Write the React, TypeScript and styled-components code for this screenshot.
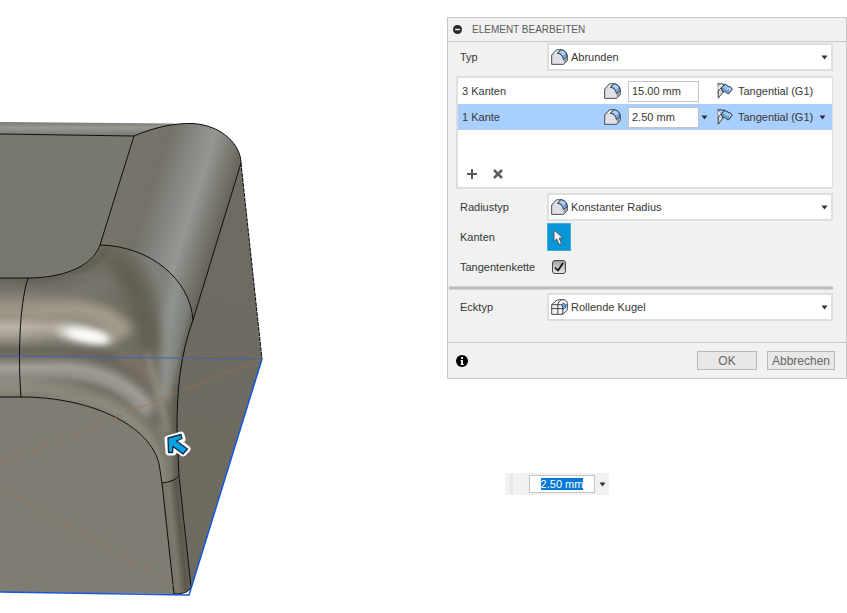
import React, { useEffect, useRef } from "react";
import styled, { createGlobalStyle } from "styled-components";

const GlobalStyle = createGlobalStyle`
  * { box-sizing: border-box; }
  body {
    margin: 0;
    background: #fff;
    font-family: "Liberation Sans", Arial, sans-serif;
    font-size: 11px;
    color: #373737;
  }
  input, select, button { font: inherit; color: inherit; margin: 0; }
`;

const Workspace = styled.main`
  display: grid;
  grid-template-columns: minmax(0, 1fr) 400px;
  min-height: 100vh;
  overflow: hidden;
`;
const Viewport = styled.div`
  overflow: hidden;
  padding-top: 110px;
`;
const Model = styled.svg`
  display: block;
  width: 270px;
  height: 490px;
`;
const Side = styled.div`
  padding-top: 17px;
`;
const Panel = styled.form`
  background: #f1f1f1;
  border: 1px solid #c8c8c8;
`;
const PanelHeader = styled.header`
  display: flex;
  align-items: center;
  gap: 10px;
  height: 24px;
  padding-left: 5px;
  border-bottom: 1px solid #c8c8c8;
`;
const Title = styled.h1`
  margin: 0;
  font-size: 10px;
  font-weight: 400;
  color: #5c5c5c;
`;
const IconButton = styled.button`
  display: flex;
  padding: 0;
  border: 0;
  background: none;
`;
const Row = styled.div`
  display: grid;
  grid-template-columns: 87px minmax(0, 1fr);
  align-items: center;
  height: 30px;
  padding: 0 13px 0 12px;
`;
const SelectBox = styled.div`
  display: flex;
  align-items: center;
  gap: 3px;
  height: 28px;
  padding: 0 3px 0 2px;
  background: #fff;
  border: 2px solid #dedede;
`;
const Select = styled.select`
  flex: 1;
  min-width: 0;
  appearance: none;
  padding: 0;
  border: 0;
  background: transparent;
`;
const List = styled.div`
  display: flex;
  flex-direction: column;
  height: 113px;
  margin: 4px 13px 3px 8px;
  background: #fff;
  border: solid #dedede;
  border-width: 2px 1px 2px 2px;
`;
const EdgeRow = styled.div<{ $selected?: boolean }>`
  display: grid;
  grid-template-columns: minmax(0, 1fr) 17px 7px 71px 11px 7px 16px 5px 78px 12px;
  align-items: center;
  height: 26px;
  padding: 0 4px;
  background: ${(p) => (p.$selected ? "#a9cffe" : "#fff")};
`;
const Cell = styled.span<{ $col: number }>`
  display: flex;
  justify-content: center;
  grid-column: ${(p) => p.$col};
`;
const RadiusInput = styled.input`
  grid-column: 4;
  width: 100%;
  height: 21px;
  padding: 0 3px;
  border: 1px solid #c4c4c4;
  border-radius: 0;
  background: #fff;
`;
const Continuity = styled(Select)`
  grid-column: 9;
  width: 100%;
`;
const ListTools = styled.div`
  display: flex;
  gap: 14px;
  margin-top: auto;
  padding: 0 0 7px 8px;
`;
const PickButton = styled.button`
  display: flex;
  align-items: center;
  justify-content: center;
  width: 24px;
  height: 28px;
  padding: 0;
  border: 1px solid #42aae0;
  background: #0696d7;
`;
const CheckWrap = styled.span`
  display: grid;
  width: 14px;
  height: 14px;
  margin-left: 5px;
  & > * { grid-area: 1 / 1; }
  svg { pointer-events: none; }
`;
const Check = styled.input`
  appearance: none;
  width: 14px;
  height: 14px;
  border: 1px solid #454545;
  border-radius: 3px;
  background: linear-gradient(#a5a5a5, #e4e4e4);
`;
const Divider = styled.hr`
  height: 4px;
  margin: 4px 13px 2px 1px;
  border: solid #d6d6d6;
  border-width: 1px 0;
  background: #bcbcbc;
`;
const Footer = styled.footer`
  display: flex;
  align-items: center;
  gap: 10px;
  height: 36px;
  margin-top: 20px;
  padding: 0 11px 0 8px;
  border-top: 1px solid #c8c8c8;
  & > :first-child { margin-right: auto; }
`;
const ActionButton = styled.button<{ $width: number }>`
  width: ${(p) => p.$width}px;
  height: 19px;
  padding: 0;
  border: 1px solid #b9b9b9;
  background: #e8e8e8;
  color: #666;
  font-size: 12px;
  line-height: 16px;
`;
const ValueBar = styled.div`
  display: flex;
  align-items: center;
  width: 104px;
  height: 22px;
  margin: 94px 0 0 58px;
  padding: 0 3px 0 5px;
  background: #f1f1f1;
`;
const Grip = styled.span`
  width: 3px;
  height: 20px;
  margin-right: 16px;
  background: conic-gradient(#dcdcdc 25%, #f1f1f1 0 50%, #dcdcdc 0 75%, #f1f1f1 0) 0 0 / 2px 2px;
`;
const ValueInput = styled.input`
  width: 66px;
  height: 18px;
  margin-right: auto;
  padding: 0;
  border: 1px solid #c4c4c4;
  outline: 0;
  background: #fff;
  line-height: 15px;
  text-align: center;
  &::selection { background: #0078d7; color: #fff; }
`;

const Caret = () => (
  <svg width="7" height="5" viewBox="0 0 7 5" aria-hidden="true">
    <path d="M.5.5h6L3.5 4.5Z" fill="#303030" />
  </svg>
);

const FilletIcon = () => (
  <svg width="17" height="16" viewBox="0 0 17 16" aria-hidden="true">
    <path d="M.7 15.3V6L5.5.8h5.2c3.2.6 5.3 3 5.6 6.4v4.4l-3.8 3.7Z" fill="#cfd1d6" stroke="#40444b" />
    <path d="M1.6 14.5V6.5L3.500 5h3c3.600.6 5.500 3.300 5.700 6.200v3.300Z" fill="#dfe1e6" />
    <path d="m3.500 4.300 3-2.800h1.800L6.400 4.300Z" fill="#fff" />
    <path d="M6.200 4.200 9.500.9c3.800-.1 6.400 2.800 6.700 6.800l-3.800 3c-.4-3.400-2.500-6.200-6.200-6.500Z" fill="#7fa6d2" stroke="#2b3f58" />
    <path d="M8.500 3.600 10.600 1.600c1.800.3 3.200 1.400 4 2.900l-2.600 2c-.8-1.400-2-2.400-3.500-2.900Z" fill="#b4d0ee" />
    <path d="M13 11.300v3.200l2.800-2.800V9Z" fill="#9699a1" />
  </svg>
);

const BallIcon = () => (
  <svg width="17" height="16" viewBox="0 0 17 16" aria-hidden="true">
    <path d="M.7 15.3V5.700L5 1.800C6 1 7 .7 8.500.7H13c2 .3 3.200 1.800 3.300 4V11l-4.500 4.300Z" fill="#f3f4f5" stroke="#454545" />
    <path d="M.7 5.700h8.800c1.600.3 2.300 1.400 2.300 3.300v6.300M.7 9.600h11M6.800 15V5.700C7.300 3.200 8.400 1.700 10.800.7M11.800 9.600l4.500-4.500" fill="none" stroke="#454545" />
    <path d="m10 5.800 2.400-1.500c1.800.5 2.600 1.700 2.700 3.700L12 10.500c0-2.200-.4-3.700-2-4.700Z" fill="#6d9fd8" stroke="#284c7b" strokeWidth=".8" />
  </svg>
);

const TangentIcon = () => (
  <svg width="16" height="16" viewBox="0 0 16 16" aria-hidden="true">
    <path d="M.8.8 4.4 4.800C2 6.500 1.100 8.600 1.200 10.200Z" fill="#fff" stroke="#505050" strokeWidth=".6" />
    <path d="M1.200 15.200V9.700c.2-2.400 1.300-4 3.600-4.900l1 4.700Z" fill="#d9d9d9" stroke="#333" strokeWidth=".9" />
    <path d="M.7.7 7.500 1.300" stroke="#333" />
    <path d="M4.500 4.700 7.500 1.200c1.800.2 3.200 2.400 5.300 2.400l2.600 2.300-3.800 5c-1.900-.1-2.700-1.900-4.200-2.400L5.500 9Z" fill="#6d9fc9" stroke="#263b52" />
    <path d="m6.200 4.600 1.900-2.200c1.600.4 3 2.200 4.600 2.400L10.600 7.400C8.900 7 7.800 5.400 6.200 4.600Z" fill="#a3c8e8" />
    <path d="m12.700 4.600 1.500 1.300-2.200 2.800Z" fill="#eaf3fb" />
  </svg>
);

const topFace = "M0 134 134 136 100 245C92 268 60 278 28 278H0Z";
const sideFillet =
  "M134 136C155 127 175 123 192 123.500C223 125 241 146 241 163L193 320C190 279 150 246 100 245Z";
const corner =
  "M0 278H28C60 278 92 268 100 245C150 246 190 279 193 320C180 356 177 390 177 430L179 476C175 480 170 482 162 483L160 470C156 428 94 397 21 397H0Z";
const frontFace = "M0 397H21C94 397 156 428 160 470L162 483 174 594 0 592Z";
const rightFace = "M241 163 262 359 189 595 191 587 179 476 177 430C177 390 180 356 193 320Z";
const frontEdge = "M162 483C170 482 175 480 179 476L191 587C189 592 183 594 174 594Z";

const ModelView = () => (
  <Model viewBox="0 110 270 490" role="img" aria-label="Modell">
    <defs>
      <linearGradient id="strip" x2="0" y2="1">
        <stop stopColor="#777970" />
        <stop offset=".4" stopColor="#959991" />
        <stop offset="1" stopColor="#777970" />
      </linearGradient>
      <linearGradient id="side" gradientUnits="userSpaceOnUse" x1="134" y1="136" x2="239" y2="169">
        <stop stopColor="#78746b" />
        <stop offset=".3" stopColor="#757168" />
        <stop offset=".5" stopColor="#838680" />
        <stop offset=".7" stopColor="#949891" />
        <stop offset=".86" stopColor="#7b7a73" />
        <stop offset="1" stopColor="#68645b" />
      </linearGradient>
      <linearGradient id="left" gradientUnits="userSpaceOnUse" x1="0" y1="278" x2="0" y2="397">
        <stop stopColor="#66625a" />
        <stop offset=".1" stopColor="#77736a" />
        <stop offset=".24" stopColor="#9c9484" />
        <stop offset=".33" stopColor="#9d9586" />
        <stop offset=".41" stopColor="#bab3a9" />
        <stop offset=".49" stopColor="#a29c92" />
        <stop offset=".6" stopColor="#6c675c" />
        <stop offset=".66" stopColor="#706c62" />
        <stop offset=".75" stopColor="#a29f9a" />
        <stop offset=".83" stopColor="#8e8c83" />
        <stop offset=".94" stopColor="#8c8a7d" />
        <stop offset="1" stopColor="#7d7a6e" />
      </linearGradient>
      <linearGradient id="fadeMask" x2="1">
        <stop offset=".2" stopColor="#fff" />
        <stop offset="1" stopColor="#000" />
      </linearGradient>
      <mask id="leftFade"><path d="M0 270H100V400H0Z" fill="url(#fadeMask)" /></mask>
      <linearGradient id="right" gradientUnits="userSpaceOnUse" x1="240" y1="170" x2="200" y2="560">
        <stop stopColor="#6f6b63" />
        <stop offset="1" stopColor="#6d6a5f" />
      </linearGradient>
      <linearGradient id="edge" gradientUnits="userSpaceOnUse" x1="166" y1="530" x2="186" y2="528">
        <stop stopColor="#77746a" />
        <stop offset=".35" stopColor="#7b786e" />
        <stop offset=".7" stopColor="#5b574b" />
        <stop offset="1" stopColor="#69655b" />
      </linearGradient>
      <clipPath id="cornerClip"><path d={corner} /></clipPath>
      <filter id="b3" filterUnits="userSpaceOnUse" x="-60" y="200" width="320" height="340"><feGaussianBlur stdDeviation="3" /></filter>
      <filter id="b5" filterUnits="userSpaceOnUse" x="-60" y="200" width="320" height="340"><feGaussianBlur stdDeviation="5" /></filter>
      <filter id="b8" filterUnits="userSpaceOnUse" x="-60" y="200" width="320" height="340"><feGaussianBlur stdDeviation="8" /></filter>
    </defs>
    <path d="M0 122 175 123.500 134 136 0 134Z" fill="url(#strip)" />
    <path d={topFace} fill="#797870" />
    <path d={sideFillet} fill="url(#side)" />
    <path d={rightFace} fill="url(#right)" />
    <path d={frontFace} fill="#7f7c74" />
    <path d={frontEdge} fill="url(#edge)" />
    <g clipPath="url(#cornerClip)" fill="none">
      <path d={corner} fill="#716d63" />
      <path d="M130 235C170 245 198 275 200 320L170 390 162 330C158 290 150 265 130 245Z" fill="#7f827b" filter="url(#b5)" />
      <path d="M191 240C174 280 163 330 166 400" stroke="#929790" strokeWidth="11" filter="url(#b5)" />
      <path d="M203 295C185 340 179 390 178 485" stroke="#5f5b51" strokeWidth="11" filter="url(#b3)" />
      <path d="M-20 278H30C65 278 100 268 108 246" stroke="#5e5a50" strokeWidth="6" filter="url(#b3)" />
      <path d="M62 290C90 288 104 285 116 280" stroke="#7c796f" strokeWidth="14" filter="url(#b8)" />
      <path d="M112 258C132 274 144 305 152 352" stroke="#59564a" strokeWidth="13" filter="url(#b8)" />
      <path d="M-20 309H60C95 310 112 316 126 336" stroke="#a39b8b" strokeWidth="20" filter="url(#b5)" />
      <path d="M-20 328H50C78 329 96 334 114 341" stroke="#b5aea3" strokeWidth="10" filter="url(#b5)" />
      <path d="M-20 352H80C108 354 126 362 145 386" stroke="#68645a" strokeWidth="12" filter="url(#b5)" />
      <path d="M118 358C134 358 144 370 149 382" stroke="#7d7368" strokeWidth="12" filter="url(#b5)" />
      <path d="M-20 367H55C100 369 130 382 151 410" stroke="#aaa7a2" strokeWidth="11" filter="url(#b5)" />
      <path d="M-20 392H20C92 392 138 405 162 470V490" stroke="#8d8b7e" strokeWidth="16" filter="url(#b5)" />
      <path d="M-20 372H55C98 374 128 388 148 416" stroke="#9d9a93" strokeWidth="5" filter="url(#b3)" />
      <path d="M147 354C155 378 160 402 168 432" stroke="#aaa597" strokeWidth="3" filter="url(#b3)" />
      <path d="M160 425C168 445 171 465 171 490" stroke="#807c72" strokeWidth="9" filter="url(#b3)" />
      <path d="M177 385V490" stroke="#5d594e" strokeWidth="6" filter="url(#b3)" />
      <path d="M0 278H100V397H0Z" fill="url(#left)" mask="url(#leftFade)" />
      <ellipse cx="84" cy="335" rx="27" ry="7" transform="rotate(10 84 335)" fill="#efede8" filter="url(#b5)" />
      <ellipse cx="88" cy="336" rx="20" ry="5" transform="rotate(12 88 336)" fill="#fff" filter="url(#b3)" />
    </g>
    <g fill="none" stroke="#0b0b0b">
      <path d="M0 134 134 136 100 245C92 268 60 278 28 278H0M134 136C155 127 175 123 192 123.500C223 125 241 146 241 163L193 320C190 279 150 246 100 245M193 320C180 356 177 390 177 430L179 476 191 587C189 592 183 594 174 594L162 483C170 482 175 480 179 476M162 483 160 470C156 428 94 397 21 397H0M28 278C19 306 18 360 21 397" />
      <path d="m241 163 21 196" strokeDasharray="4 1" />
    </g>
    <g fill="none" stroke="#a36f45" strokeDasharray="11 4" opacity=".8">
      <path d="M0 463 262 359M0 487 187 593" />
    </g>
    <path d="M0 356 262 359" stroke="#4262b5" />
    <path d="M262 359 189 595 0 592" fill="none" stroke="#1456e0" strokeWidth="1.500" />
    <g strokeLinejoin="round">
      <path d="M168 439 181 435 182 439 177 441 187 449 183 453 173 446 173 452 169 452Z" fill="#fff" stroke="#fff" strokeWidth="7" />
      <path d="M168 438 181 434.500 182 438.500 176.500 441 187.500 449 183 454 173 446.500 172.500 452.500 168.500 452.500Z" fill="#09a1e4" stroke="#102b3a" strokeWidth="1.300" />
    </g>
  </Model>
);

type FieldProps = { id: string; label: string; value: string; icon: React.ReactNode };

const SelectField = ({ id, label, value, icon }: FieldProps) => (
  <Row>
    <label htmlFor={id}>{label}</label>
    <SelectBox>
      {icon}
      <Select id={id}><option>{value}</option></Select>
      <Caret />
    </SelectBox>
  </Row>
);

type EdgeProps = { name: string; radius: string; selected?: boolean };

const EdgeSet = ({ name, radius, selected }: EdgeProps) => (
  <EdgeRow $selected={selected}>
    <span>{name}</span>
    <Cell $col={2}><FilletIcon /></Cell>
    <RadiusInput aria-label={`Radius ${name}`} defaultValue={radius} />
    {selected && <Cell $col={5}><Caret /></Cell>}
    <Cell $col={7}><TangentIcon /></Cell>
    <Continuity aria-label={`Stetigkeit ${name}`}><option>Tangential (G1)</option></Continuity>
    {selected && <Cell $col={10}><Caret /></Cell>}
  </EdgeRow>
);

export default function App() {
  const valueRef = useRef<HTMLInputElement>(null);
  useEffect(() => {
    valueRef.current?.focus();
    valueRef.current?.select();
  }, []);

  return (
    <>
      <GlobalStyle />
      <Workspace>
        <Viewport><ModelView /></Viewport>
        <Side>
          <Panel onSubmit={(e) => e.preventDefault()}>
            <PanelHeader>
              <IconButton type="button" aria-label="Einklappen">
                <svg width="9" height="9" viewBox="0 0 9 9">
                  <circle cx="4.500" cy="4.500" r="4.500" fill="#262626" />
                  <path d="M2 4.500h5" stroke="#eee" strokeWidth="1.500" />
                </svg>
              </IconButton>
              <Title>ELEMENT BEARBEITEN</Title>
            </PanelHeader>
            <SelectField id="typ" label="Typ" value="Abrunden" icon={<FilletIcon />} />
            <List>
              <EdgeSet name="3 Kanten" radius="15.00 mm" />
              <EdgeSet name="1 Kante" radius="2.50 mm" selected />
              <ListTools>
                <IconButton type="button" aria-label="Hinzufügen">
                  <svg width="12" height="12" viewBox="0 0 12 12"><path d="M6 1v10M1 6h10" stroke="#5a5a5a" strokeWidth="2" /></svg>
                </IconButton>
                <IconButton type="button" aria-label="Entfernen">
                  <svg width="12" height="12" viewBox="0 0 12 12"><path d="m2 2 8 8M10 2l-8 8" stroke="#5a5a5a" strokeWidth="2.500" /></svg>
                </IconButton>
              </ListTools>
            </List>
            <SelectField id="radiustyp" label="Radiustyp" value="Konstanter Radius" icon={<FilletIcon />} />
            <Row>
              <label htmlFor="kanten">Kanten</label>
              <PickButton id="kanten" type="button">
                <svg width="12" height="17" viewBox="0 0 12 17" aria-hidden="true">
                  <path d="M1 1v11.500l2.700-2.600 2.400 5.600 2.400-1-2.400-5.400H10Z" fill="#f5f5f5" stroke="#4d5a62" />
                </svg>
              </PickButton>
            </Row>
            <Row>
              <label htmlFor="kette">Tangentenkette</label>
              <CheckWrap>
                <Check id="kette" type="checkbox" defaultChecked />
                <svg width="14" height="14" viewBox="0 0 14 14" aria-hidden="true">
                  <path d="m3 7.500 3 3L11 3" fill="none" stroke="#111" strokeWidth="1.700" />
                </svg>
              </CheckWrap>
            </Row>
            <Divider />
            <SelectField id="ecktyp" label="Ecktyp" value="Rollende Kugel" icon={<BallIcon />} />
            <Footer>
              <IconButton type="button" aria-label="Info">
                <svg width="12" height="12" viewBox="0 0 12 12">
                  <circle cx="6" cy="6" r="6" fill="#000" />
                  <path d="M5 2h2v2H5ZM4.500 5H7v4h1v1H4.500V9H5V6h-.5Z" fill="#f1f1f1" />
                </svg>
              </IconButton>
              <ActionButton type="submit" $width={60}>OK</ActionButton>
              <ActionButton type="button" $width={68}>Abbrechen</ActionButton>
            </Footer>
          </Panel>
          <ValueBar>
            <Grip />
            <ValueInput ref={valueRef} aria-label="Radius" defaultValue="2.50 mm" />
            <Caret />
          </ValueBar>
        </Side>
      </Workspace>
    </>
  );
}
